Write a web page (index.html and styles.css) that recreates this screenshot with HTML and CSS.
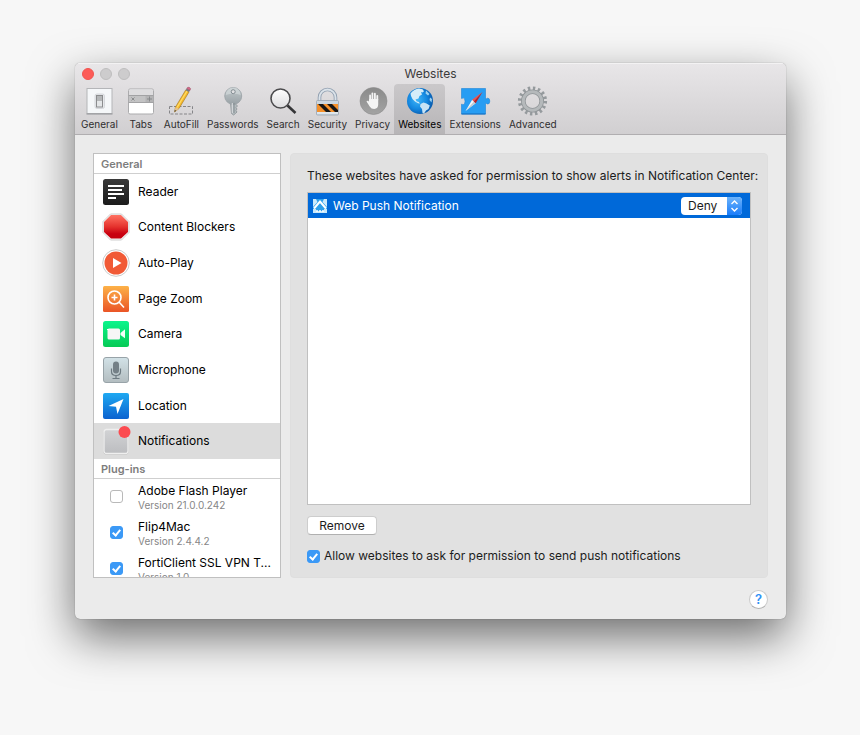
FILE: index.html
```html
<!DOCTYPE html>
<html lang="en">
<head>
    <meta charset="UTF-8">
    <meta name="viewport" content="width=device-width, initial-scale=1.0">
    <title>Websites</title>
    <link rel="stylesheet" href="styles.css">
</head>
<body>
    <!-- shared gradients -->
    <svg class="defs" width="0" height="0" aria-hidden="true">
        <defs>
            <linearGradient id="metal" x1="0" y1="0" x2="0" y2="1"><stop offset="0" stop-color="#c3cacd"/><stop offset="1" stop-color="#98a1a5"/></linearGradient>
            <linearGradient id="glass" x1="0" y1="0" x2="0" y2="1"><stop offset="0" stop-color="#fff"/><stop offset="1" stop-color="#dcdcde"/></linearGradient>
            <linearGradient id="gray" x1="0" y1="0" x2="0" y2="1"><stop offset="0" stop-color="#8a8a8a"/><stop offset="1" stop-color="#a3a3a3"/></linearGradient>
            <radialGradient id="ocean" cx=".4" cy=".45" r=".6"><stop offset="0" stop-color="#3fb6f8"/><stop offset=".6" stop-color="#1488e0"/><stop offset="1" stop-color="#0a5cae"/></radialGradient>
            <linearGradient id="black" x1="0" y1="0" x2="0" y2="1"><stop offset="0" stop-color="#3a3a3a"/><stop offset="1" stop-color="#1b1b1b"/></linearGradient>
            <linearGradient id="red" x1="0" y1="0" x2="0" y2="1"><stop offset="0" stop-color="#ff7262"/><stop offset=".5" stop-color="#e5322d"/><stop offset=".8" stop-color="#c90010"/><stop offset="1" stop-color="#c4000e"/></linearGradient>
            <linearGradient id="orange" x1="0" y1="0" x2="0" y2="1"><stop offset="0" stop-color="#fdb248"/><stop offset="1" stop-color="#ea5426"/></linearGradient>
            <linearGradient id="green" x1="0" y1="0" x2="0" y2="1"><stop offset="0" stop-color="#0af58c"/><stop offset="1" stop-color="#06ca55"/></linearGradient>
            <linearGradient id="silver" x1="0" y1="0" x2="0" y2="1"><stop offset="0" stop-color="#d2e2e7"/><stop offset="1" stop-color="#b3bdc0"/></linearGradient>
            <linearGradient id="blue" x1="0" y1="0" x2="0" y2="1"><stop offset="0" stop-color="#1fa9f2"/><stop offset="1" stop-color="#0b62cf"/></linearGradient>
            <linearGradient id="note" x1="0" y1="0" x2="0" y2="1"><stop offset="0" stop-color="#d2d3d5"/><stop offset="1" stop-color="#bcbdc0"/></linearGradient>
        </defs>
    </svg>

    <main class="window">
        <header class="titlebar">
            <div class="title-row">
                <div class="lights">
                    <button class="light close" aria-label="Close"></button>
                    <button class="light" aria-label="Minimize"></button>
                    <button class="light" aria-label="Zoom"></button>
                </div>
                <h1>Websites</h1>
            </div>
            <nav class="toolbar">
                <button class="tool">
                    <svg width="32" height="32" viewBox="0 0 32 32">
                        <rect x="4" y="3.500" width="25" height="25" fill="#f5f7f9" stroke="#b4b5b8"/>
                        <path d="M3.500 29h26" stroke="#929397"/>
                        <rect x="12" y="9" width="9.500" height="14.500" rx="2" fill="#e7e9ec" stroke="#d6d8dc"/>
                        <rect x="13.500" y="10.500" width="6" height="11.500" fill="#e4e6e8" stroke="#8b8c8e"/>
                        <path d="M14 11h5v5h-5z" fill="#b4b6b8"/>
                    </svg>
                    General
                </button>
                <button class="tool">
                    <svg width="32" height="32" viewBox="0 0 32 32">
                        <rect x="3.500" y="4" width="25" height="25" rx="1.500" fill="#fff" stroke="#ababad"/>
                        <path d="M4 11V5.500Q4 4.500 5 4.500h22q1 0 1 1V11z" fill="#dedddf"/>
                        <path d="M4 11h24v7H4z" fill="#c3c3c4"/>
                        <path d="M20.500 11h7.500v7h-7.500z" fill="#b4b4b5"/>
                        <path d="M3.500 10.500h25M3.500 17.500h25" stroke="#a2a2a4"/>
                        <path d="M6.500 12.500l3 3m0-3l-3 3M24.500 11.500v5m-2.500-2.500h5" stroke="#858688" stroke-width=".9"/>
                    </svg>
                    Tabs
                </button>
                <button class="tool">
                    <svg width="32" height="32" viewBox="0 0 32 32">
                        <rect x="4.500" y="21.500" width="23" height="7.500" fill="none" stroke="#858588" stroke-dasharray="3 1.500"/>
                        <path d="M9.500 27l1-5L20.700 5l3.300 2-10 16.500z" fill="#f6b92c" stroke="#9c7120" stroke-width=".6"/>
                        <path d="M12 22.500L22 6" stroke="#ffdc65" stroke-width="1.300"/>
                        <path d="M9.500 27l1-5 3.500 1.700z" fill="#e5c28c"/>
                        <path d="M9.500 27l.4-2 1.300.7z" fill="#333"/>
                        <path d="M20.700 5l1-1.600 3.300 2-1 1.600z" fill="#777b80"/>
                        <path d="M21.700 3.400q1.100-1.900 2.900-.9t.4 2.900z" fill="#d76987" stroke="#97435c" stroke-width=".5"/>
                    </svg>
                    AutoFill
                </button>
                <button class="tool">
                    <svg width="32" height="32" viewBox="0 0 32 32">
                        <path d="M13.500 18h5.500v1.500l1.500 1.500-1.500 1.500 1 1.500-1 1.500 1 1.500-1.500 1.500-2 1.500-2-1.500z" fill="#b2babd" stroke="#8a9296" stroke-width=".8"/>
                        <circle cx="16.200" cy="11" r="8.500" fill="url(#metal)" stroke="#98a0a4" stroke-width=".8"/>
                        <path d="M8.700 10a7.500 7.500 0 0 1 15 0q-7-2.500-15 0z" fill="#d2d8da" opacity=".7"/>
                        <path d="M15.300 18v10" stroke="#dadddf"/>
                        <path d="M17 18v10" stroke="#838c90"/>
                        <circle cx="16.200" cy="6.700" r="2" fill="#e1e1e3" stroke="#7b858a" stroke-width=".9"/>
                    </svg>
                    Passwords
                </button>
                <button class="tool">
                    <svg width="32" height="32" viewBox="0 0 32 32">
                        <circle cx="13.500" cy="13.500" r="9.500" fill="url(#glass)" stroke="#4b4b4d" stroke-width="1.600"/>
                        <path d="M20.500 20.500l8 7.500" stroke="#353537" stroke-width="2.600"/>
                    </svg>
                    Search
                </button>
                <button class="tool">
                    <svg width="32" height="32" viewBox="0 0 32 32">
                        <path d="M8.500 17v-4.500a8 8 0 0 1 16 0V17" fill="none" stroke="#93a1b1" stroke-width="3.600"/>
                        <path d="M8.500 17v-4.500a8 8 0 0 1 16 0V17" fill="none" stroke="#dbe3ea" stroke-width="1.800"/>
                        <rect x="5.500" y="15.500" width="22" height="14.500" rx="1" fill="#cbd7e1" stroke="#9aa5b0" stroke-width=".8"/>
                        <path d="M6 19h21v8H6z" fill="#f4902b"/>
                        <path d="M7 19h5l8 8h-5zM16 19h5l6 6v2h-3z" fill="#161616"/>
                        <path d="M6 28h21" stroke="#f2f6f8"/>
                    </svg>
                    Security
                </button>
                <button class="tool">
                    <svg width="32" height="32" viewBox="0 0 32 32">
                        <circle cx="16.500" cy="16" r="13.500" fill="url(#gray)" stroke="#8b8b8c" stroke-width=".6"/>
                        <path d="M13.100 15v-4.500M15.400 14V8.300M17.900 14V8.700M20.300 15v-4.200" stroke="#f4f4f4" stroke-width="1.800" stroke-linecap="round"/>
                        <path d="M12.200 14h9v5.500q0 4-4 4.500-3 0-4.500-2.500l-3.200-5q.8-1.500 2.200 0z" fill="#f4f4f4"/>
                    </svg>
                    Privacy
                </button>
                <button class="tool selected" aria-current="page">
                    <svg width="32" height="32" viewBox="0 0 32 32">
                        <circle cx="16" cy="16" r="13" fill="url(#ocean)"/>
                        <path d="M6.500 8.500Q10 4 15 3.500l3.500.7 1.500 2-1.500 1.300-1.500-.5 1 2.500-2.500 1.500-1 2.500-3 1 1.300 2 1.700.3 1.500 1.700-2-.3-3-1.700L8.500 14 7 11z" fill="#d6edf9"/>
                        <path d="M16.500 19l3-1.500 3 1 3.300 2-1.300 3.500-2.500 1.500-2 3-1.500-.5-.5-4-2-2.500z" fill="#c7e3f4"/>
                        <path d="M22 5.500l3.500 3.500-1.500 1.500-2.500-2zM26 12.500l2 1.500-.5 3.500-2-2.500z" fill="#9bd2f2"/>
                    </svg>
                    Websites
                </button>
                <button class="tool">
                    <svg width="32" height="32" viewBox="0 0 32 32">
                        <path d="M2.500 3.500h24v10.300q1 .2 1.700-.6 2.600-.4 2.600 2.900t-2.600 2.900q-.7-.8-1.700-.6V29h-24V19.200q.8-.2 1.500.6 2-.2 2-3.500t-2-3.500q-.7.800-1.500.6z" fill="#279df3" stroke="#1c84d6" stroke-width=".6"/>
                        <path d="M2.500 29h24" stroke="#176fc0"/>
                        <path d="M6.500 26l6.700-11.200 3.400 3.400z" fill="#f5f7f9"/>
                        <path d="M6.500 26l8.400-9.500 1.700 1.700z" fill="#bfcbd4"/>
                        <path d="M23.500 7l-10.300 7.800 1.700 1.700z" fill="#fc5147"/>
                        <path d="M23.500 7l-6.900 11.200-1.700-1.700z" fill="#bd1f22"/>
                    </svg>
                    Extensions
                </button>
                <button class="tool">
                    <svg width="32" height="32" viewBox="0 0 32 32">
                        <circle cx="15.500" cy="16" r="12.800" fill="none" stroke="#959a9d" stroke-width="3.600" stroke-dasharray="2.400 2.627"/>
                        <circle cx="15.500" cy="16" r="9.200" fill="none" stroke="#8f9497" stroke-width="4.600"/>
                        <circle cx="15.500" cy="16" r="9.200" fill="none" stroke="#b5b9bb" stroke-width="3"/>
                    </svg>
                    Advanced
                </button>
            </nav>
        </header>

        <div class="content">
            <aside class="sidebar">
                <h2>General</h2>
                <ul class="settings">
                    <li>
                        <svg width="28" height="28" viewBox="0 0 28 28">
                            <rect x="1" y="1" width="26" height="26" rx="2.500" fill="url(#black)"/>
                            <path d="M6 8h16M6 12h14M6 16h16M6 20h8" stroke="#fff" stroke-width="1.800"/>
                        </svg>
                        Reader
                    </li>
                    <li>
                        <svg width="28" height="28" viewBox="0 0 28 28">
                            <path d="M8.500 1h11L27 8.500v11L19.500 27h-11L1 19.500v-11z" fill="#f5f5f5" stroke="#cfcfcf"/>
                            <path d="M9 2h10l7 7v10l-7 6.500H9L2 19V9z" fill="url(#red)"/>
                        </svg>
                        Content Blockers
                    </li>
                    <li>
                        <svg width="28" height="28" viewBox="0 0 28 28">
                            <circle cx="14" cy="14" r="13.300" fill="#fff" stroke="#cbcbcb"/>
                            <circle cx="14" cy="14" r="11.500" fill="#f15a36"/>
                            <path d="M11 9l8.500 5-8.500 5z" fill="#fff"/>
                        </svg>
                        Auto-Play
                    </li>
                    <li>
                        <svg width="28" height="28" viewBox="0 0 28 28">
                            <rect x="1" y="1" width="26" height="26" rx="1.500" fill="url(#orange)"/>
                            <circle cx="12.500" cy="12.500" r="6.500" fill="none" stroke="#fff" stroke-width="1.600"/>
                            <path d="M17 17l5 5.500M9.500 12.500h6M12.500 9.500v6" stroke="#fff" stroke-width="1.600"/>
                        </svg>
                        Page Zoom
                    </li>
                    <li>
                        <svg width="28" height="28" viewBox="0 0 28 28">
                            <rect x="1" y="1" width="26" height="26" rx="2.500" fill="url(#green)"/>
                            <rect x="5.500" y="8.500" width="12.500" height="11" rx="1.500" fill="#f6f6f6"/>
                            <path d="M18.500 13l4.500-3.700v9L18.500 15z" fill="#f3fff8"/>
                            <path d="M5 9.500h2" stroke="#fff"/>
                        </svg>
                        Camera
                    </li>
                    <li>
                        <svg width="28" height="28" viewBox="0 0 28 28">
                            <rect x="1.500" y="1.500" width="25" height="25" rx="2.500" fill="url(#silver)" stroke="#98a3a8"/>
                            <rect x="11" y="5.500" width="6" height="12" rx="3" fill="#748087"/>
                            <path d="M9.500 12.500v3q0 4 4.500 4t4.500-4v-3M14 19.500v3M10.500 22.500h7" fill="none" stroke="#6d7a81" stroke-width="1.200"/>
                        </svg>
                        Microphone
                    </li>
                    <li>
                        <svg width="28" height="28" viewBox="0 0 28 28">
                            <rect x="1" y="1" width="26" height="26" rx="2" fill="url(#blue)"/>
                            <path d="M21.500 7L6.500 14l7.500.8L15.500 22z" fill="#fff"/>
                        </svg>
                        Location
                    </li>
                    <li class="selected">
                        <svg width="28" height="28" viewBox="0 0 28 28" overflow="visible">
                            <rect x="1.500" y="3" width="25" height="24.500" rx="3" fill="#b4b4b4"/>
                            <rect x="2" y="2.500" width="24" height="24" rx="2.500" fill="url(#note)" stroke="#efefef" stroke-width="1.300"/>
                            <circle cx="22.500" cy="5" r="6" fill="#fb4b50"/>
                        </svg>
                        Notifications
                    </li>
                </ul>
                <h2>Plug-ins</h2>
                <ul class="plugins">
                    <li>
                        <input type="checkbox" id="flash">
                        <label for="flash">Adobe Flash Player <small>Version 21.0.0.242</small></label>
                    </li>
                    <li>
                        <input type="checkbox" id="flip4mac" checked>
                        <label for="flip4mac">Flip4Mac <small>Version 2.4.4.2</small></label>
                    </li>
                    <li>
                        <input type="checkbox" id="forticlient" checked>
                        <label for="forticlient">FortiClient SSL VPN T... <small>Version 1.0</small></label>
                    </li>
                </ul>
            </aside>

            <section class="panel">
                <p>These websites have asked for permission to show alerts in Notification Center:</p>
                <div class="sites">
                    <div class="site">
                        <svg width="14" height="14" viewBox="0 0 14 14">
                            <path d="M0 0h14v14H0z" fill="#2d9fea"/>
                            <path d="M0 0h3l1.500 3L0 8zM14 0h-3L9.500 3 14 8z" fill="#c9e9fb"/>
                            <path d="M1 9.500l6-7 6 7" fill="none" stroke="#fff" stroke-width="2"/>
                            <path d="M0 10h3v2h8v-2h3v4H0z" fill="#c9e9fb"/>
                            <path d="M3 12h8" stroke="#fff" stroke-width="1.500" stroke-dasharray="2 1"/>
                        </svg>
                        <label for="permission">Web Push Notification</label>
                        <span class="popup">
                            <select id="permission">
                                <option>Allow</option>
                                <option selected>Deny</option>
                            </select>
                            <svg width="15" height="18" viewBox="0 0 15 18">
                                <path d="M4.500 7l3-3 3 3M4.500 11l3 3 3-3" fill="none" stroke="#fff" stroke-width="1.400"/>
                            </svg>
                        </span>
                    </div>
                </div>
                <button class="remove">Remove</button>
                <div class="allow">
                    <input type="checkbox" id="allow" checked>
                    <label for="allow">Allow websites to ask for permission to send push notifications</label>
                </div>
            </section>
        </div>

        <footer>
            <button class="help" aria-label="Help">?</button>
        </footer>
    </main>
</body>
</html>
```
FILE: styles.css
```css
* {
    box-sizing: border-box;
}

body {
    min-height: 100vh;
    margin: 0;
    padding: 63px 74px 80px 75px;
    background-color: #f7f7f7;
    color: #1c1c1c;
    font-family: Inter, "Liberation Sans", sans-serif;
    font-size: 12px;
    line-height: 16px;
}

h1, h2, p, ul {
    margin: 0;
    padding: 0;
}

ul {
    list-style: none;
}

button, select {
    margin: 0;
    padding: 0;
    border: none;
    color: inherit;
    font: inherit;
}

svg {
    display: block;
    flex: none;
}

.defs {
    position: absolute;
}

.window {
    border-radius: 5px;
    background-color: #ebebeb;
    box-shadow: 0 18px 46px rgba(0, 0, 0, 0.56), 0 0 1px rgba(0, 0, 0, 0.5);
    overflow: hidden;
}

.titlebar {
    border-top: 1px solid #f3f2f3;
    border-bottom: 1px solid #b0aeb0;
    background: linear-gradient(#e8e6e8, #d1cfd1);
}

.title-row {
    display: grid;
    grid-template-columns: 1fr auto 1fr;
    align-items: center;
    height: 20px;
    padding: 0 7px;
}

h1 {
    color: #3b3a3b;
    font-size: 12px;
    font-weight: 400;
}

.lights {
    display: flex;
    gap: 6px;
}

.light {
    width: 12px;
    height: 12px;
    border: 1px solid #bebdbe;
    border-radius: 50%;
    background-color: #cdcccd;
}

.light.close {
    border-color: #f0544f;
    background-color: #fc5b57;
}

.toolbar {
    display: flex;
    padding-left: 2px;
}

.tool {
    display: flex;
    flex-direction: column;
    align-items: center;
    height: 50px;
    padding: 1px 4px 0;
    background: none;
    color: #2f2e2f;
    font-size: 10px;
    line-height: 15px;
}

.tool svg {
    margin: 0 -1px;
}

.tool.selected {
    border-radius: 4px 4px 0 0;
    background: linear-gradient(#cac8ca, #b7b5b7);
    color: #000;
}

.content {
    display: flex;
    gap: 9px;
    padding: 18px 18px 0;
}

.sidebar {
    flex: none;
    width: 188px;
    height: 425px;
    border: 1px solid #c0c0c0;
    background-color: #fff;
    color: #000;
    overflow: hidden;
}

h2 {
    height: 20px;
    padding-left: 7px;
    border-bottom: 1px solid #cfcfcf;
    color: #7d7d7d;
    font-size: 11px;
    font-weight: 600;
    line-height: 20px;
}

.settings {
    display: grid;
    grid-auto-rows: 1fr;
    height: 285px;
}

.settings li {
    display: flex;
    align-items: center;
    gap: 8px;
    padding-left: 8px;
}

.settings .selected {
    background-color: #dcdcdc;
}

input[type="checkbox"] {
    position: relative;
    flex: none;
    width: 13px;
    height: 13px;
    margin: 0;
    border: 1px solid #b9b9b9;
    border-radius: 3px;
    background-color: #fff;
    appearance: none;
}

input[type="checkbox"]:checked {
    border-color: #3b99f6;
    background-color: #3b99f6;
}

input[type="checkbox"]:checked::after {
    content: "";
    position: absolute;
    top: 1px;
    left: 3px;
    width: 3px;
    height: 6px;
    border: solid #fff;
    border-width: 0 2px 2px 0;
    transform: rotate(40deg);
}

.plugins li {
    display: flex;
    align-items: flex-start;
    gap: 15px;
    height: 36px;
    padding: 4px 0 0 16px;
}

.plugins input[type="checkbox"] {
    margin-top: 7px;
}

.plugins label {
    line-height: 15px;
    white-space: nowrap;
}

.plugins small {
    display: block;
    color: #868686;
    font-size: 10px;
    line-height: 14px;
}

.panel {
    flex: 1;
    min-width: 0;
    padding: 14px 16px 0;
    border: 1px solid #dedede;
    border-radius: 4px;
    background-color: #e1e1e1;
}

.panel p {
    white-space: nowrap;
}

.sites {
    height: 313px;
    margin: 8px 0 11px;
    border: 1px solid #c0c0c0;
    background-color: #fff;
}

.site {
    display: flex;
    align-items: center;
    gap: 6px;
    height: 25px;
    padding: 0 8px 0 5px;
    background-color: #0069d9;
    color: #fff;
}

.popup {
    display: flex;
    margin-left: auto;
    border-radius: 4px;
    background-color: #fff;
    color: #1c1c1c;
    overflow: hidden;
}

.popup select {
    width: 46px;
    height: 18px;
    padding-left: 7px;
    background: none;
    appearance: none;
}

.popup svg {
    background: linear-gradient(#6cb3fa, #1a7dfb);
}

.remove {
    display: block;
    width: 70px;
    height: 19px;
    border: 1px solid #cdcdcd;
    border-bottom-color: #b0b0b0;
    border-radius: 4px;
    background-color: #fff;
}

.allow {
    display: flex;
    align-items: center;
    gap: 4px;
    margin-top: 13px;
}

footer {
    display: flex;
    justify-content: flex-end;
    padding: 12px 18px 10px;
}

.help {
    width: 19px;
    height: 19px;
    border: 1px solid #cacaca;
    border-bottom-color: #b3b3b3;
    border-radius: 50%;
    background-color: #fff;
    color: #2f91f5;
    font-size: 13px;
    font-weight: 600;
    line-height: 17px;
}
```
